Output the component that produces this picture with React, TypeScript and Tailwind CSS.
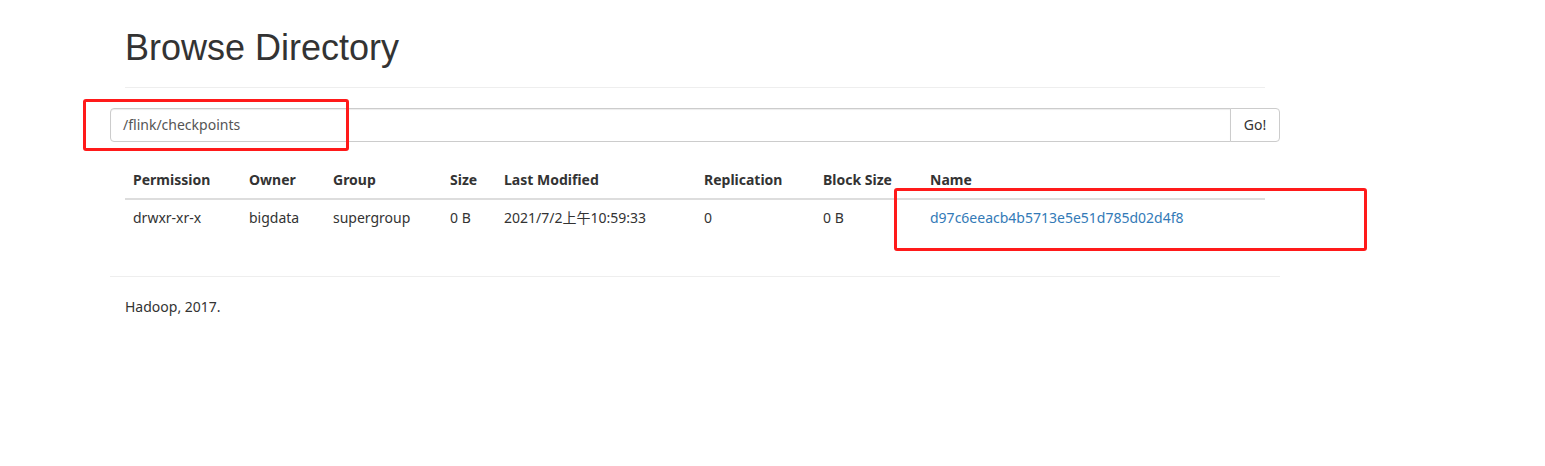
import React from "react";

const cols = [
  { h: "Permission", v: "drwxr-xr-x", w: "w-[116px]" },
  { h: "Owner", v: "bigdata", w: "w-[84px]" },
  { h: "Group", v: "supergroup", w: "w-[117px]" },
  { h: "Size", v: "0 B", w: "w-[54px]" },
  { h: "Last Modified", v: "2021/7/2上午10:59:33", w: "w-[200px]" },
  { h: "Replication", v: "0", w: "w-[119px]" },
  { h: "Block Size", v: "0 B", w: "w-[107px]" },
  { h: "Name", v: "d97c6eeacb4b5713e5e51d785d02d4f8", w: "w-[343px]" },
];

export default function App() {
  return (
    <div className="relative min-h-[466px] w-full bg-white text-[14px] leading-[20px] text-[#333] font-['Noto_Sans','Noto_Sans_CJK_SC',sans-serif]">
      <div className="ml-[110px] w-[1170px] pt-[28px]">
        <div className="mx-[15px] border-b border-[#eee] pb-[9px]">
          <h1 className="mb-[10px] text-[36px] leading-[39.6px] font-normal text-[#333] font-['Liberation_Sans',Arial,sans-serif]">
            Browse Directory
          </h1>
        </div>

        <div className="mt-[20px] flex h-[34px]">
          <div className="flex flex-1 items-center rounded-l-[4px] border border-[#ccc] px-[12px] text-[#555] shadow-[inset_0_1px_1px_rgba(0,0,0,0.075)]">
            /flink/checkpoints
          </div>
          <button className="-ml-px flex w-[50px] items-center justify-center rounded-r-[4px] border border-[#ccc] bg-white text-[#333]">
            Go!
          </button>
        </div>

        <div className="mx-[15px] mt-[20px] mb-[40px]">
          <table className="w-[1140px] table-fixed border-collapse">
            <thead>
              <tr>
                {cols.map((c) => (
                  <th
                    key={c.h}
                    className={`${c.w} border-b-2 border-[#ddd] p-[8px] text-left font-bold`}
                  >
                    {c.h}
                  </th>
                ))}
              </tr>
            </thead>
            <tbody>
              <tr>
                {cols.map((c) => (
                  <td
                    key={c.h}
                    className="border-t border-[#ddd] p-[8px] text-left whitespace-nowrap"
                  >
                    {c.h === "Name" ? (
                      <a className="text-[#337ab7]">{c.v}</a>
                    ) : (
                      c.v
                    )}
                  </td>
                ))}
              </tr>
            </tbody>
          </table>
        </div>

        <hr className="mb-[20px] border-0 border-t border-[#eee]" />

        <div className="px-[15px]">
          <p>Hadoop, 2017.</p>
        </div>
      </div>

      <div className="absolute left-[83px] top-[99px] h-[52px] w-[266px] rounded-[3px] border-[3px] border-[#ff1a1a]" />
      <div className="absolute left-[894px] top-[188px] h-[63px] w-[473px] rounded-[3px] border-[3px] border-[#ff1a1a]" />
    </div>
  );
}
